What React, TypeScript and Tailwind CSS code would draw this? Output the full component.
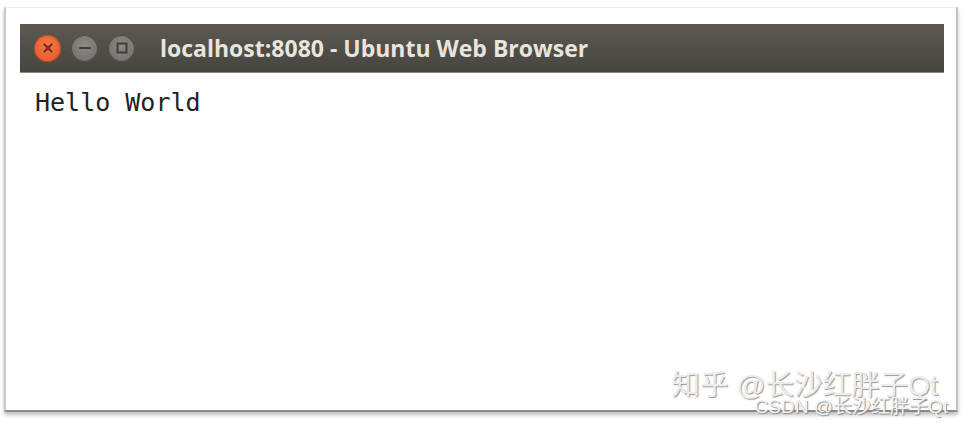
import React from "react";

function WinButton({ kind }: { kind: "close" | "min" | "max" }) {
  const isClose = kind === "close";
  return (
    <div
      className={
        "w-[27px] h-[27px] rounded-full flex items-center justify-center " +
        (isClose
          ? "bg-[radial-gradient(circle_at_50%_40%,#f47c4c,#e0531f)] shadow-[inset_0_0_0_1px_#b84a22]"
          : "bg-[radial-gradient(circle_at_50%_40%,#8c8a84,#6d6b66)] shadow-[inset_0_0_0_1px_#4a4843]")
      }
    >
      <svg width="14" height="14" viewBox="0 0 14 14">
        {kind === "close" && (
          <path d="M3.5 3.5 L10.5 10.5 M10.5 3.5 L3.5 10.5" stroke="#7a2a10" strokeWidth="2.2" strokeLinecap="round" />
        )}
        {kind === "min" && <path d="M2 7 H12" stroke="#3e3d39" strokeWidth="2.2" strokeLinecap="round" />}
        {kind === "max" && <rect x="2.5" y="2.5" width="9" height="9" fill="none" stroke="#3e3d39" strokeWidth="2" />}
      </svg>
    </div>
  );
}

export default function App() {
  return (
    <div className="w-[963px] h-[427px] bg-white relative overflow-hidden">
      <div className="ml-[4px] mt-[7px] w-[954px] h-[405px] bg-white relative border-t border-t-[#ececec] border-l-2 border-l-[#c9c9c9] border-r-2 border-r-[#c4c4c4] border-b-2 border-b-[#8a8a8a] shadow-[0_3px_4px_rgba(0,0,0,0.25)]">
        <div className="ml-[14px] mt-[16px] w-[924px] h-[49px] bg-gradient-to-b from-[#5b5952] to-[#47453f] border-b border-b-[#8d8a82] flex items-center">
          <div className="flex items-center gap-[10px] ml-[14px]">
            <WinButton kind="close" />
            <WinButton kind="min" />
            <WinButton kind="max" />
          </div>
          <div
            className="ml-[25px] text-[23px] font-bold text-[#e8e5de]"
            style={{ fontFamily: '"Open Sans", "DejaVu Sans", sans-serif' }}
          >
            localhost:8080 - Ubuntu Web Browser
          </div>
        </div>
        <div
          className="ml-[29px] mt-[15px] text-[25px] leading-[30px] text-[#222]"
          style={{ fontFamily: '"DejaVu Sans Mono", monospace' }}
        >
          Hello World
        </div>
        <div
          className="absolute right-[18px] bottom-[10px] text-[28.5px] leading-[30px] text-[#ececec] [text-shadow:1px_1px_1px_#9a9a9a]"
          style={{ fontFamily: '"Liberation Sans", "Noto Sans CJK SC", sans-serif' }}
        >
          知乎 @长沙红胖子Qt
        </div>
      </div>
      <div
        className="absolute right-[15px] top-[396px] text-[19px] leading-[21px] text-[#f2f2f2] [text-shadow:1px_1px_1px_#8a8a8a]"
        style={{ fontFamily: '"Liberation Sans", "Noto Sans CJK SC", sans-serif' }}
      >
        CSDN @长沙红胖子Qt
      </div>
    </div>
  );
}
